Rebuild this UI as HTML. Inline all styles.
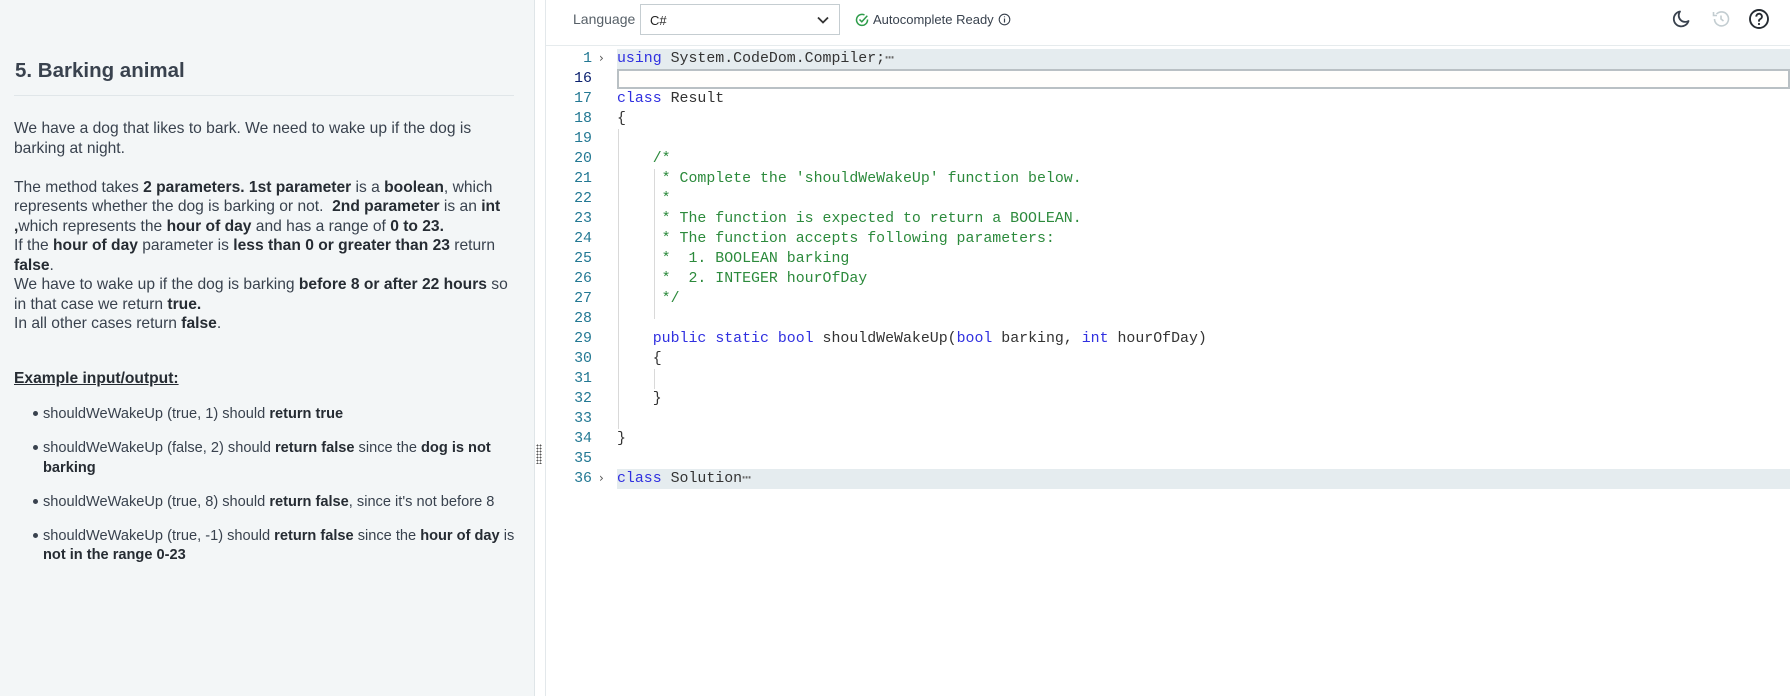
<!DOCTYPE html>
<html><head><meta charset="utf-8"><style>
*{margin:0;padding:0;box-sizing:border-box}
body{width:1790px;height:696px;overflow:hidden;background:#fff;font-family:"Liberation Sans",sans-serif;position:relative}
#left{position:absolute;left:0;top:0;width:535px;height:696px;background:#f3f6f7;border-right:1px solid #dfe5e8;color:#39424e}
h1{position:absolute;left:15px;top:59px;font-size:20.5px;font-weight:bold;color:#39424e}
.hr{position:absolute;left:14px;top:95px;width:500px;height:1px;background:#e0e6e9}
.txt{position:absolute;left:14px;top:119px;width:510px;font-size:15.6px;line-height:19.5px}
.txt b{color:#262c33}
.txt p{margin-bottom:19.5px}
.ex{position:absolute;left:14px;top:370px;font-size:15.6px;font-weight:bold;text-decoration:underline;color:#262c33}
ul{position:absolute;left:0;top:405px;width:515px;list-style:none;font-size:14.6px;line-height:19.5px}
li{position:relative;padding-left:43px;margin-bottom:14.5px}
li:before{content:"";position:absolute;left:33px;top:6px;width:5px;height:5px;border-radius:50%;background:#39424e}
li b{color:#262c33}
.grip{position:absolute;left:536px;top:444px;width:6px;height:20px;background-image:radial-gradient(#555 0.8px,transparent 1px);background-size:3px 3px}
#right{position:absolute;left:545px;top:0;right:0;height:696px;border-left:1px solid #e3e8eb}
.tb{position:absolute;left:0;right:0;top:0;height:46px;border-bottom:1px solid #e6ebed}
.lang{position:absolute;left:27px;top:11px;font-size:14px;color:#576068}
.sel{position:absolute;left:94px;top:4px;width:200px;height:31px;border:1px solid #c5cdd1;font-size:13px;color:#222;padding:8px 9px}
.sel svg{position:absolute;right:10px;top:11px}
.ac{position:absolute;left:309px;top:12px;font-size:13px;color:#39424e;display:flex;align-items:center;gap:4px}
.ic{position:absolute;top:8px}
.code{position:absolute;left:0;top:49px;right:0;font-family:"Liberation Mono",monospace;font-size:14.9px}
.ln{position:absolute;left:0;width:46px;text-align:right;color:#237893;height:20px;line-height:20px}
.cl{position:absolute;left:71px;right:0;height:20px;line-height:20px;white-space:pre;color:#333}
.hl{background:#e5ecef}
.k{color:#3030e0}.c{color:#2c8a3c}
.g{position:absolute;width:1px;background:#d9d9d9}
.chev{position:absolute;left:53px;color:#555;font-family:"DejaVu Sans",sans-serif;font-size:12px}
</style></head><body>
<div id="left">
<h1>5. Barking animal</h1>
<div class="hr"></div>
<div class="txt">
<p>We have a dog that likes to bark. We need to wake up if the dog is barking at night.</p>
<p>The method takes <b>2 parameters. 1st parameter</b> is a <b>boolean</b>, which represents whether the dog is barking or not.&nbsp; <b>2nd parameter</b> is an <b>int ,</b>which represents the <b>hour of day</b> and has a range of <b>0 to 23.</b><br>If the <b>hour of day</b> parameter is <b>less than 0 or greater than 23</b> return <b>false</b>.<br>We have to wake up if the dog is barking <b>before 8 or after 22 hours</b> so in that case we return <b>true.</b><br>In all other cases return <b>false</b>.</p>
</div>
<div class="ex">Example input/output:</div>
<ul>
<li>shouldWeWakeUp (true, 1) should <b>return true</b></li>
<li>shouldWeWakeUp (false, 2) should <b>return false</b> since the <b>dog is not barking</b></li>
<li>shouldWeWakeUp (true, 8) should <b>return false</b>, since it's not before 8</li>
<li>shouldWeWakeUp (true, -1) should <b>return false</b> since the <b>hour of day</b> is <b>not in the range 0-23</b></li>
</ul>
</div>
<div class="grip"></div>
<div id="right">
<div class="tb">
<div class="lang">Language</div>
<div class="sel">C#<svg width="12" height="8" viewBox="0 0 12 8"><path d="M1 1.5l5 5 5-5" fill="none" stroke="#333" stroke-width="1.8"/></svg></div>
<div class="ac"><svg width="14" height="14" viewBox="0 0 14 14"><path d="M12.5 6.5A5.5 5.5 0 1 1 9.5 2" fill="none" stroke="#2e9c4a" stroke-width="1.5"/><path d="M4.5 6.5l2.3 2.3 5.5-6" fill="none" stroke="#2e9c4a" stroke-width="1.5"/></svg>Autocomplete Ready <svg width="13" height="13" viewBox="0 0 13 13"><circle cx="6.5" cy="6.5" r="5.3" fill="none" stroke="#39424e" stroke-width="1.1"/><path d="M6.5 5.5v4M6.5 3.4v.9" stroke="#39424e" stroke-width="1.2"/></svg></div>
<svg class="ic" style="left:1124px" width="22" height="22" viewBox="0 0 22 22"><path d="M10 3.5a7.5 7.5 0 1 0 8.5 9.5A6.5 6.5 0 0 1 10 3.5z" fill="none" stroke="#39424e" stroke-width="1.8" stroke-linejoin="round"/></svg>
<svg class="ic" style="left:1164px" width="22" height="22" viewBox="0 0 22 22"><path d="M4.5 11a7 7 0 1 0 2-5" fill="none" stroke="#c3cdd1" stroke-width="1.6"/><path d="M3.5 4v3.5H7" fill="none" stroke="#c3cdd1" stroke-width="1.6"/><path d="M11 7.5V11l2.5 2" fill="none" stroke="#c3cdd1" stroke-width="1.6"/></svg>
<svg class="ic" style="left:1202px" width="22" height="22" viewBox="0 0 22 22"><circle cx="11" cy="11" r="9" fill="none" stroke="#262c33" stroke-width="1.9"/><path d="M8.3 8.6a2.8 2.8 0 1 1 3.9 2.5c-.9.4-1.2 1-1.2 1.9v.6" fill="none" stroke="#262c33" stroke-width="1.9"/><circle cx="11" cy="16" r="1.1" fill="#262c33"/></svg>
</div>
<div class="code">
<div class="cl hl" style="top:0"><span class="k">using</span> System.CodeDom.Compiler;<span style="color:#666">⋯</span></div>
<div class="ln" style="top:0">1</div><div class="chev" style="top:2px">›</div>
<div class="cl" style="top:20px;border:2px solid #b9c0c4;background:#fffefc"></div>
<div class="ln" style="top:20px;color:#0b216f">16</div>
<div class="ln" style="top:40px">17</div><div class="cl" style="top:40px"><span class="k">class</span> Result</div>
<div class="ln" style="top:60px">18</div><div class="cl" style="top:60px">{</div>
<div class="ln" style="top:80px">19</div>
<div class="ln" style="top:100px">20</div><div class="cl c" style="top:100px">    /*</div>
<div class="ln" style="top:120px">21</div><div class="cl c" style="top:120px">     * Complete the 'shouldWeWakeUp' function below.</div>
<div class="ln" style="top:140px">22</div><div class="cl c" style="top:140px">     *</div>
<div class="ln" style="top:160px">23</div><div class="cl c" style="top:160px">     * The function is expected to return a BOOLEAN.</div>
<div class="ln" style="top:180px">24</div><div class="cl c" style="top:180px">     * The function accepts following parameters:</div>
<div class="ln" style="top:200px">25</div><div class="cl c" style="top:200px">     *  1. BOOLEAN barking</div>
<div class="ln" style="top:220px">26</div><div class="cl c" style="top:220px">     *  2. INTEGER hourOfDay</div>
<div class="ln" style="top:240px">27</div><div class="cl c" style="top:240px">     */</div>
<div class="ln" style="top:260px">28</div>
<div class="ln" style="top:280px">29</div><div class="cl" style="top:280px">    <span class="k">public</span> <span class="k">static</span> <span class="k">bool</span> shouldWeWakeUp(<span class="k">bool</span> barking, <span class="k">int</span> hourOfDay)</div>
<div class="ln" style="top:300px">30</div><div class="cl" style="top:300px">    {</div>
<div class="ln" style="top:320px">31</div>
<div class="ln" style="top:340px">32</div><div class="cl" style="top:340px">    }</div>
<div class="ln" style="top:360px">33</div>
<div class="ln" style="top:380px">34</div><div class="cl" style="top:380px">}</div>
<div class="ln" style="top:400px">35</div>
<div class="cl hl" style="top:420px"><span class="k">class</span> Solution<span style="color:#666">⋯</span></div>
<div class="ln" style="top:420px">36</div><div class="chev" style="top:422px">›</div>
<div class="g" style="left:72px;top:80px;height:300px"></div>
<div class="g" style="left:108px;top:120px;height:150px"></div>
<div class="g" style="left:108px;top:320px;height:20px"></div>
</div>
</div>
</body></html>
